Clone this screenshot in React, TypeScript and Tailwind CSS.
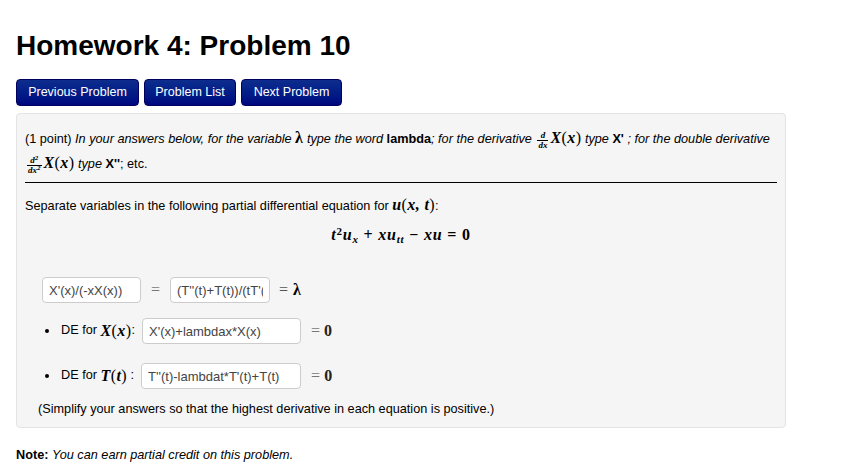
import React from 'react';

const mathFont = "font-['Liberation_Serif',serif]";

function Frac({ num, den }: { num: React.ReactNode; den: React.ReactNode }) {
  return (
    <span className={`inline-flex flex-col items-center align-[5px] mx-[2px] ${mathFont} italic font-bold text-[9px] leading-[9px]`}>
      <span className="px-[1px]">{num}</span>
      <span className="self-stretch border-t border-black"></span>
      <span className="px-[1px]">{den}</span>
    </span>
  );
}

function M({ children, className = '' }: { children: React.ReactNode; className?: string }) {
  return <span className={`${mathFont} italic font-bold text-[16px] tracking-[0.4px] ${className}`}>{children}</span>;
}

function Paren({ children }: { children: React.ReactNode }) {
  return <span className="not-italic font-normal">{children}</span>;
}

function Answer({ value, width }: { value: string; width: string }) {
  return (
    <input
      readOnly
      value={value}
      className={`${width} h-[26px] bg-white border border-[#cccccc] rounded-[4px] px-[6px] text-[13px] text-[#444] font-['Liberation_Sans',Arial,sans-serif] outline-none`}
    />
  );
}

function Bullet() {
  return <span className="absolute -left-[16px] top-[11px] w-[4px] h-[4px] rounded-full bg-black"></span>;
}

function EqZero() {
  return (
    <span className={`${mathFont} text-[16px] ml-[10px]`}>
      <span className="text-[#777]">=</span> <b className="text-[#222]">0</b>
    </span>
  );
}

export default function App() {
  return (
    <div className="w-[842px] h-[476px] bg-white text-black font-['Liberation_Sans',Arial,sans-serif] text-[12.7px] px-[16px] pt-[30px] overflow-hidden">
      <h1 className="text-[28px] font-bold leading-[32px]">Homework 4: Problem 10</h1>

      <div className="flex gap-[5px] mt-[17px]">
        {['Previous Problem', 'Problem List', 'Next Problem'].map((label, i) => (
          <button
            key={label}
            className={`h-[27px] ${i === 0 ? 'w-[123px]' : i === 1 ? 'w-[92px]' : 'w-[101px]'} rounded-[4px] border border-[#00005e] bg-linear-to-b from-[#0e2d8e] to-[#00057f] text-white text-[12.5px]`}
          >
            {label}
          </button>
        ))}
      </div>

      <div className="mt-[7px] w-[770px] h-[315px] bg-[#f5f5f5] border border-[#e3e3e3] rounded-[4px] px-[8px] pt-[12px]">
        <p className="leading-[23px] h-[46px]">
          (1 point){' '}
          <i>
            In your answers below, for the variable <M className="not-italic">λ</M> type the word
          </i>{' '}
          <b>lambda</b>
          <i>; for the derivative</i> <Frac num="d" den="dx" />
          <M>
            X<Paren>(</Paren>x<Paren>)</Paren>
          </M>{' '}
          <i>type</i> <b>X'</b> <i>; for the double derivative</i>
          <br />
          <Frac
            num={
              <>
                d<sup className="text-[7px]">2</sup>
              </>
            }
            den={
              <>
                dx<sup className="text-[7px]">2</sup>
              </>
            }
          />
          <M>
            X<Paren>(</Paren>x<Paren>)</Paren>
          </M>{' '}
          <i>type</i> <b>X''</b>; etc.
        </p>

        <div className="mt-[10px] border-t border-black"></div>

        <p className="mt-[10px] leading-[23px] h-[23px]">
          Separate variables in the following partial differential equation for{' '}
          <M>
            u<Paren>(</Paren>x, t<Paren>)</Paren>
          </M>
          :
        </p>
        <div className="text-center leading-[26px] h-[26px] mt-[6px]">
          <M className="tracking-[0.8px]">
            t<sup className="text-[11px] not-italic">2</sup>u<sub className="text-[11px]">x</sub>
            <span className="not-italic"> + </span>xu<sub className="text-[11px]">tt</sub>
            <span className="not-italic"> − </span>xu<span className="not-italic"> = 0</span>
          </M>
        </div>

        <div className="ml-[17px] mt-[29px] flex items-center h-[26px]">
          <Answer value="X'(x)/(-xX(x))" width="w-[99px]" />
          <span className={`${mathFont} text-[16px] text-[#777] mx-[10px]`}>=</span>
          <Answer value="(T''(t)+T(t))/(tT'(t))" width="w-[100px]" />
          <span className={`${mathFont} text-[16px] text-[#555] ml-[9px]`}>=</span>
          <M className="ml-[5px] not-italic">λ</M>
        </div>

        <ul className="ml-[36px] mt-[15px]">
          <li className="flex items-center relative h-[26px]">
            <Bullet />
            <span>DE for&nbsp;</span>
            <M>
              X<Paren>(</Paren>x<Paren>)</Paren>
            </M>
            <span>:&nbsp;&nbsp;</span>
            <Answer value="X'(x)+lambdax*X(x)" width="w-[159px]" />
            <EqZero />
          </li>
          <li className="flex items-center relative h-[26px] mt-[19px]">
            <Bullet />
            <span>DE for&nbsp;</span>
            <M>
              T<Paren>(</Paren>t<Paren>)</Paren>
            </M>
            <span>&nbsp;:&nbsp;&nbsp;</span>
            <Answer value="T''(t)-lambdat*T'(t)+T(t)" width="w-[160px]" />
            <EqZero />
          </li>
        </ul>

        <p className="ml-[13px] mt-[9px] leading-[23px]">
          (Simplify your answers so that the highest derivative in each equation is positive.)
        </p>
      </div>

      <p className="mt-[16px] leading-[23px]">
        <b>Note:</b> <i>You can earn partial credit on this problem.</i>
      </p>
    </div>
  );
}
